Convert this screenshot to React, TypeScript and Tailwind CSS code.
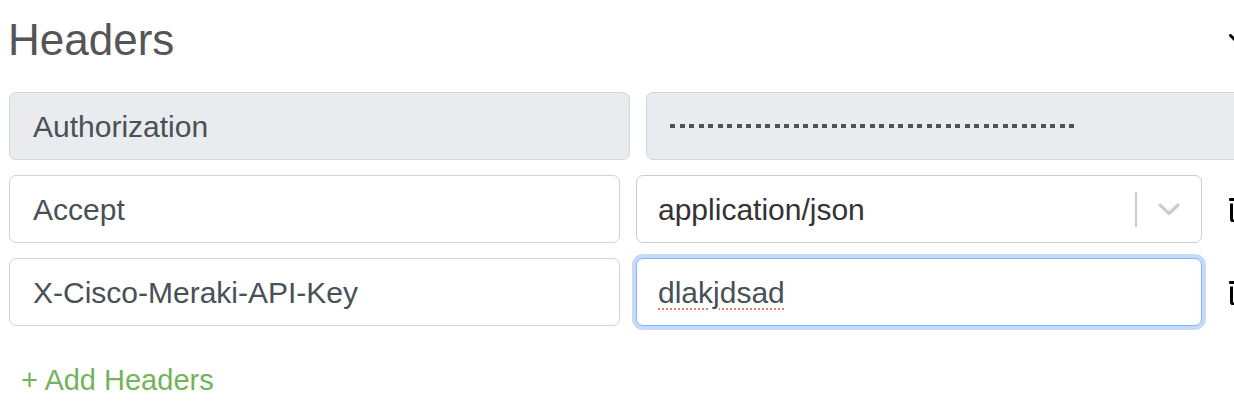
import React from "react";

type Header = { key: string; value: string; kind: "select" | "text" };

const HEADERS: Header[] = [
  { key: "Accept", value: "application/json", kind: "select" },
  { key: "X-Cisco-Meraki-API-Key", value: "dlakjdsad", kind: "text" },
];

export default function App() {
  return (
    <div className="h-[416px] w-[1234px] overflow-hidden bg-white font-['Liberation_Sans',Arial,sans-serif]">
      <div className="w-[1270px] pl-[9px]">
        {/* Title */}
        <div className="flex h-[92px] w-[1238px] items-start justify-between">
          <h2 className="-ml-[1px] mt-[14px] text-[44px] leading-[52px] text-[#555558]">Headers</h2>
          <ChevronIcon />
        </div>

        <div className="flex flex-col gap-[15px]">
          {/* Locked auth row */}
          <div className="flex gap-4">
            <div className="flex h-[68px] w-[621px] items-center rounded-[7px] border border-[#d3d6da] bg-[#e9ebef] px-[23px] text-[30px] text-[#495057]">
              Authorization
            </div>
            <div className="flex h-[68px] w-[621px] items-center gap-[4.5px] rounded-[7px] border border-[#d3d6da] bg-[#e9ebef] px-[23px]">
              {Array.from({ length: 43 }).map((_, i) => (
                <span key={i} className="h-[4px] w-[5px] bg-[#4d5258]" />
              ))}
            </div>
          </div>

          {HEADERS.map((h) => (
            <div key={h.key} className="flex items-center">
              <div className="flex h-[68px] w-[611px] items-center rounded-[7px] border border-[#ced4da] bg-white px-[23px] text-[30px] text-[#495057]">
                {h.key}
              </div>
              {h.kind === "select" ? (
                <div className="ml-4 flex h-[68px] w-[566px] items-center rounded-[7px] border border-[#cccccc] bg-white pl-[21px] text-[30px] text-[#333333]">
                  <span className="flex-1">{h.value}</span>
                  <span className="h-[35px] w-[2px] bg-[#cccccc]" />
                  <span className="flex w-[64px] justify-center">
                    <svg width="22" height="13" viewBox="0 0 22 13" fill="none" aria-hidden="true">
                      <path d="M2 2l9 8.5L20 2" stroke="#cccccc" strokeWidth="3.2" strokeLinecap="round" strokeLinejoin="round" />
                    </svg>
                  </span>
                </div>
              ) : (
                <div className="ml-4 flex h-[68px] w-[566px] items-center rounded-[7px] border border-[#86b5f6] bg-white px-[21px] text-[30px] text-[#495057] ring-4 ring-[#c8dafb]">
                  <span className="underline decoration-[#ee7a6c] decoration-dotted decoration-2 underline-offset-[6px]">
                    {h.value}
                  </span>
                </div>
              )}
              <button className="ml-[27px] text-black" aria-label="Delete header">
                <TrashIcon />
              </button>
            </div>
          ))}
        </div>

        <button className="ml-[12px] mt-[36px] text-[29px] leading-[36px] text-[#72b35c]">+ Add Headers</button>
      </div>
    </div>
  );
}

function ChevronIcon() {
  return (
    <svg className="mt-[34px]" width="18" height="11" viewBox="0 0 18 11" fill="none" aria-hidden="true">
      <path d="M1.5 1.5L9 9l7.5-7.5" stroke="#000" strokeWidth="3" strokeLinecap="round" strokeLinejoin="round" />
    </svg>
  );
}

function TrashIcon() {
  return (
    <svg width="22" height="26" viewBox="0 0 22 26" fill="none" aria-hidden="true" className="block">
      <rect x="0" y="2" width="22" height="3" rx="1" fill="currentColor" />
      <rect x="7" y="0" width="8" height="3" rx="1" fill="currentColor" />
      <path d="M2.5 7.5V23a2 2 0 002 2h13a2 2 0 002-2V7.5" stroke="currentColor" strokeWidth="3" />
      <path d="M8 10v11M14 10v11" stroke="currentColor" strokeWidth="2" />
    </svg>
  );
}
